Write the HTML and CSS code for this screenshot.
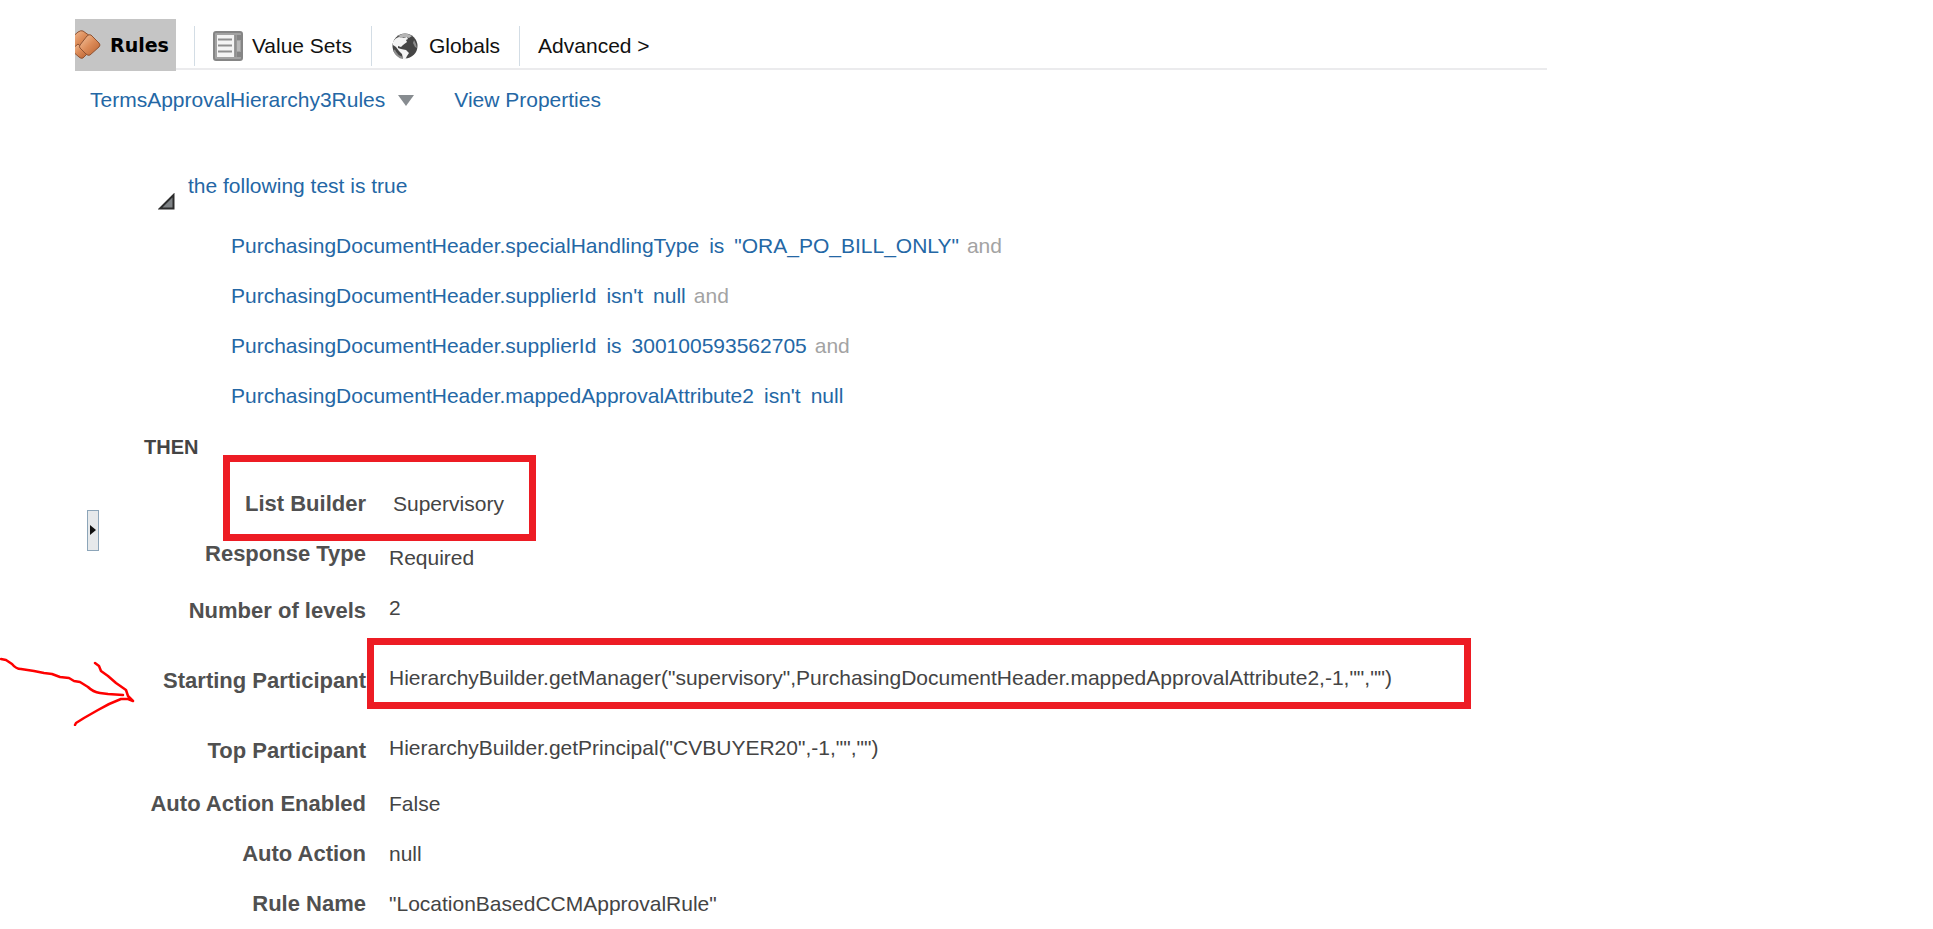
FILE: index.html
```html
<!DOCTYPE html>
<html lang="en">
<head>
<meta charset="utf-8">
<title>Rules</title>
<link rel="stylesheet" href="styles.css">
</head>
<body>
<div class="page">
  <nav class="tabs">
    <button class="tab tab-active" type="button">
      <svg class="icon-rules" width="26" height="30" viewBox="0 0 26 30" aria-hidden="true">
        <defs>
          <linearGradient id="copper" x1="0" y1="0" x2="1" y2="1">
            <stop offset="0" stop-color="#f6c8a4"/><stop offset="0.5" stop-color="#dc8b58"/><stop offset="1" stop-color="#b8602f"/>
          </linearGradient>
        </defs>
        <path d="M-6 10 3 2q3-2 5-1l7 5-9 16-12-6z" fill="url(#copper)" stroke="#8f5333" stroke-width="1"/>
        <path d="M-4 20 3 14 13 23 8 28q-2 1-4-1z" fill="url(#copper)" stroke="#8f5333" stroke-width="1"/>
        <path d="M5 15 12 6q2-2 4-1l8 8q2 2 0 4l-9 8q-2 1-4-1l-6-6q-1-1 0-3z" fill="url(#copper)" stroke="#8f5333" stroke-width="1"/>
      </svg>
      <span>Rules</span>
    </button>
    <button class="tab" type="button">
      <svg width="30" height="30" viewBox="0 0 30 30" aria-hidden="true">
        <rect x="1" y="1" width="28" height="28" rx="2" fill="#a3a3a3" stroke="#858585" stroke-width="2"/>
        <rect x="4" y="4" width="17" height="22" fill="#f4f4f4"/>
        <path d="M5 8.500h14M5 14.500h14M5 20.500h14" stroke="#8f8f8f" stroke-width="2"/>
        <path d="M22.500 4v22" stroke="#8f8f8f" stroke-width="2"/>
        <rect x="24" y="4" width="4" height="5" fill="#858585"/><rect x="24" y="21" width="4" height="5" fill="#858585"/>
        <rect x="24" y="10" width="3" height="10" fill="#b9b9b9"/>
      </svg>
      <span>Value Sets</span>
    </button>
    <button class="tab" type="button">
      <svg width="26" height="28" viewBox="0 0 26 28" aria-hidden="true">
        <circle cx="13" cy="14" r="12.500" fill="#454545"/>
        <path d="M6 4q7-5 14 0l-3 2q-4-2-7 0z" fill="#b5b5b5"/>
        <path d="M1 10q2-4 6-5l4 1 4-1 1 2-2 1 1 2-4 3-2 2-3-1 0 2 3 1 5 1 3 3-2 3-2 4-2-1-1-5-3-3-3-4-3-2z" fill="#f4f4f4"/>
        <path d="M22 8l2 4 1 4-2-1-2-4z" fill="#8d8d8d"/>
        <path d="M2 18q3 7 9 8" fill="none" stroke="#8d8d8d" stroke-width="2"/>
      </svg>
      <span>Globals</span>
    </button>
    <button class="tab" type="button"><span>Advanced &gt;</span></button>
  </nav>

  <div class="subbar">
    <button class="link-button" type="button">TermsApprovalHierarchy3Rules
      <svg width="16" height="11" viewBox="0 0 16 11" aria-hidden="true"><path d="M0 0h16l-8 11z" fill="#878c90"/></svg>
    </button>
    <a href="#">View Properties</a>
  </div>

  <div class="workspace">
    <button class="splitter" type="button" aria-label="Expand pane">
      <svg width="6" height="10" viewBox="0 0 6 10" aria-hidden="true"><path d="M0 0l6 5-6 5z" fill="#111"/></svg>
    </button>
    <main class="rule">
      <div class="test">
        <button class="toggle" type="button" aria-label="Collapse test">
          <svg width="17" height="17" viewBox="0 0 17 17" aria-hidden="true"><path d="M2 15.500 15.500 2v13.500z" fill="#7e8285" stroke="#2c2c2c" stroke-width="2"/></svg>
        </button>
        <a href="#">the following test is true</a>
      </div>
      <ul class="conditions">
        <li><span class="terms"><a href="#">PurchasingDocumentHeader.specialHandlingType</a><a href="#">is</a><a href="#">"ORA_PO_BILL_ONLY"</a></span><span class="joiner">and</span></li>
        <li><span class="terms"><a href="#">PurchasingDocumentHeader.supplierId</a><a href="#">isn't</a><a href="#">null</a></span><span class="joiner">and</span></li>
        <li><span class="terms"><a href="#">PurchasingDocumentHeader.supplierId</a><a href="#">is</a><a href="#">300100593562705</a></span><span class="joiner">and</span></li>
        <li><span class="terms"><a href="#">PurchasingDocumentHeader.mappedApprovalAttribute2</a><a href="#">isn't</a><a href="#">null</a></span></li>
      </ul>
      <h2 class="then">THEN</h2>
      <dl class="fields">
        <div class="field field-builder"><dt>List Builder</dt><dd>Supervisory</dd></div>
        <div class="field value-low"><dt>Response Type</dt><dd>Required</dd></div>
        <div class="field value-high"><dt>Number of levels</dt><dd>2</dd></div>
        <div class="field value-high field-wide field-start"><dt>Starting Participant</dt><dd>HierarchyBuilder.getManager("supervisory",PurchasingDocumentHeader.mappedApprovalAttribute2,-1,"","")</dd></div>
        <div class="field value-high field-wide"><dt>Top Participant</dt><dd>HierarchyBuilder.getPrincipal("CVBUYER20",-1,"","")</dd></div>
        <div class="field"><dt>Auto Action Enabled</dt><dd>False</dd></div>
        <div class="field"><dt>Auto Action</dt><dd>null</dd></div>
        <div class="field"><dt>Rule Name</dt><dd>"LocationBasedCCMApprovalRule"</dd></div>
      </dl>
    </main>
  </div>

  <svg class="arrow" width="136" height="72" viewBox="0 0 136 72" aria-hidden="true">
    <path d="M1 5 6 6 12 10Q16 15 21 15L34 17 44 19 52 20 60 23 69 24 74 27 80 28 88 33Q93 38 100 39L108 40 123 41M95 9 99 12 101 17 108 22 116 29 126 36 128 42 133 47 128 45 121 45Q110 49 98 56L84 64 76 69 75 71" fill="none" stroke="#fe0000" stroke-width="2.500" stroke-linejoin="round" stroke-linecap="round"/>
  </svg>
</div>
</body>
</html>
```
FILE: styles.css
```css
*, *::before, *::after { box-sizing: border-box; }
body {
  margin: 0;
  background: #fff;
  color: #444;
  font: 21px/24px "Liberation Sans", Arial, sans-serif;
}
svg { display: block; flex: none; }
a { color: #2467a5; text-decoration: none; }
button {
  padding: 0;
  border: 0;
  background: none;
  color: inherit;
  font: inherit;
  cursor: pointer;
}
.page { position: relative; padding-top: 19px; }

.tabs {
  display: flex;
  align-items: flex-start;
  width: calc(80% - 74px);
  height: 52px;
  margin-left: 75px;
  background: linear-gradient(#ebebed, #ebebed) 0 49px / 100% 2px no-repeat;
  color: #111;
}
.tab {
  display: flex;
  align-items: center;
  gap: 9px;
  height: 40px;
  margin-top: 7px;
  padding: 0 19px 0 18px;
  border-left: 1px solid #d3dde5;
  white-space: nowrap;
}
.tab + .tab + .tab { padding-left: 20px; gap: 11px; }
.tab + .tab + .tab + .tab { padding-left: 18px; }
.tab-active {
  height: 52px;
  margin: 0 18px 0 0;
  padding: 0 7px 0 0;
  border: 0;
  background: #c5c5c5;
  color: #000;
  font: bold 19px/24px "DejaVu Sans", Verdana, sans-serif;
}

.subbar {
  display: flex;
  gap: 40px;
  padding: 17px 0 19px 90px;
}
.link-button {
  display: flex;
  align-items: center;
  gap: 13px;
  color: #2467a5;
}

.workspace { display: flex; align-items: center; padding-left: 87px; }
.splitter {
  display: flex;
  flex: none;
  align-items: center;
  justify-content: center;
  width: 12px;
  height: 41px;
  border: 1px solid #8ca5b9;
  background: #e6e9eb;
}
.rule { flex: 1; padding: 43px 0 13px; }
.test { display: flex; gap: 13px; height: 36px; padding-left: 59px; }
.toggle { align-self: flex-end; }
.conditions {
  display: flex;
  flex-direction: column;
  gap: 26px;
  margin: 24px 0 27px;
  padding: 0 0 0 132px;
  list-style: none;
}
.conditions li { display: flex; gap: 8px; }
.terms { display: flex; gap: 10px; }
.joiner { color: #a3a3a3; }
.then { margin: 0 0 33px 45px; font-size: 20px; }

.fields { display: flex; flex-direction: column; margin: 0; }
.field {
  position: relative;
  display: grid;
  grid-template-columns: 267px 1fr;
  column-gap: 23px;
  margin-bottom: 26px;
}
.field:last-child { margin-bottom: 0; }
.field dt { font-size: 22px; font-weight: bold; text-align: right; color: #505050; }
.field dd { margin: 0; }
.field-wide { margin-bottom: 43px; }
.field-wide + .field-wide { margin-bottom: 29px; }
.value-low { height: 28px; }
.value-low dd { align-self: end; }
.value-high { height: 27px; }
.value-high dt { align-self: end; }
.value-high:not(.field-wide) { margin-bottom: 43px; }
.field-builder dd { padding-left: 4px; }

.field-builder::after,
.field-start::after {
  content: "";
  position: absolute;
  border: 7px solid #ed1c24;
  pointer-events: none;
}
.field-builder::after { left: 124px; top: -37px; width: 313px; height: 86px; }
.field-start::after { left: 268px; top: -28px; width: 1104px; height: 71px; }
.arrow { position: absolute; left: 0; top: 654px; }
```
